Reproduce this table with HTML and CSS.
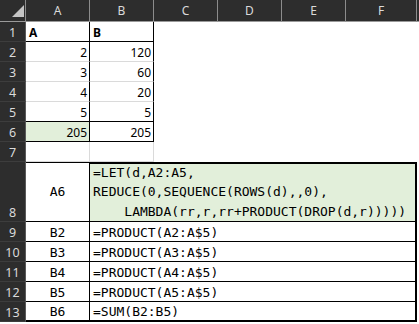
FILE: index.html
```html
<!DOCTYPE html>
<html>
  <head>
    <meta charset="utf-8" />
    <title>Sheet1</title>
    <link rel="stylesheet" href="styles.css">
  </head>
  <body>
    <div class="sheet">
      <!-- column headings -->
      <div class="corner">
        <svg width="26" height="21" viewBox="0 0 26 21"><polygon points="12,17 24,17 24,5" fill="#c4c4c4"/></svg>
      </div>
      <div class="ch">A</div>
      <div class="ch">B</div>
      <div class="ch">C</div>
      <div class="ch">D</div>
      <div class="ch">E</div>
      <div class="ch">F</div>
      <div class="ch end"></div>

      <!-- small table A1:B6 -->
      <div class="rh">1</div>
      <div class="c ta ul bold">A</div>
      <div class="c ta ul bold">B</div>
      <div class="c"></div><div class="c"></div><div class="c"></div><div class="c"></div><div class="c"></div>

      <div class="rh">2</div>
      <div class="c ta num">2</div>
      <div class="c ta num">120</div>
      <div class="c"></div><div class="c"></div><div class="c"></div><div class="c"></div><div class="c"></div>

      <div class="rh">3</div>
      <div class="c ta num">3</div>
      <div class="c ta num">60</div>
      <div class="c"></div><div class="c"></div><div class="c"></div><div class="c"></div><div class="c"></div>

      <div class="rh">4</div>
      <div class="c ta num">4</div>
      <div class="c ta num">20</div>
      <div class="c"></div><div class="c"></div><div class="c"></div><div class="c"></div><div class="c"></div>

      <div class="rh">5</div>
      <div class="c ta ul num">5</div>
      <div class="c ta ul num">5</div>
      <div class="c"></div><div class="c"></div><div class="c"></div><div class="c"></div><div class="c"></div>

      <div class="rh">6</div>
      <div class="c ta ul num green">205</div>
      <div class="c ta ul num">205</div>
      <div class="c"></div><div class="c"></div><div class="c"></div><div class="c"></div><div class="c"></div>

      <div class="rh">7</div>
      <div class="c grid"></div>
      <div class="c grid"></div>
      <div class="c"></div><div class="c"></div><div class="c"></div><div class="c"></div><div class="c"></div>

      <!-- formulas block A8:F13 -->
      <div class="rh">8</div>
      <div class="c ka top">A6</div>
      <div class="c kb top green multi">=LET(d,A2:A5,<br>REDUCE(0,SEQUENCE(ROWS(d),,0),<br>&nbsp;&nbsp;&nbsp;&nbsp;LAMBDA(rr,r,rr+PRODUCT(DROP(d,r)))))</div>
      <div class="c"></div>

      <div class="rh">9</div>
      <div class="c ka">B2</div>
      <div class="c kb">=PRODUCT(A2:A$5)</div>
      <div class="c"></div>

      <div class="rh">10</div>
      <div class="c ka">B3</div>
      <div class="c kb">=PRODUCT(A3:A$5)</div>
      <div class="c"></div>

      <div class="rh">11</div>
      <div class="c ka">B4</div>
      <div class="c kb">=PRODUCT(A4:A$5)</div>
      <div class="c"></div>

      <div class="rh">12</div>
      <div class="c ka">B5</div>
      <div class="c kb">=PRODUCT(A5:A$5)</div>
      <div class="c"></div>

      <div class="rh">13</div>
      <div class="c ka last">B6</div>
      <div class="c kb last">=SUM(B2:B5)</div>
      <div class="c"></div>
    </div>
  </body>
</html>
```

FILE: styles.css
```css
body {
  margin: 0;
  background: #fff;
  font-family: "Noto Sans", sans-serif;
}
.sheet {
  display: grid;
  grid-template-columns: 26px repeat(5, 64px) 71px 2px;
  grid-template-rows: 22px repeat(7, 20px) 60px repeat(5, 20px);
  width: 419px;
}
.sheet > div {
  box-sizing: border-box;
}
.corner {
  background: #2d2d2d;
  border-right: 1px solid #8c8c8c;
  border-bottom: 1px solid #9a9a9a;
}
.corner svg {
  display: block;
}
.ch {
  display: flex;
  align-items: center;
  justify-content: center;
  background: #2d2d2d;
  color: #dadada;
  font-size: 12px;
  border-right: 1px solid #8c8c8c;
  border-bottom: 1px solid #9a9a9a;
}
.ch.end {
  border-right: none;
}
.rh {
  display: flex;
  align-items: flex-end;
  justify-content: center;
  background: #2d2d2d;
  color: #dadada;
  font-size: 12.5px;
  line-height: 17px;
  border-bottom: 1px solid #3d3d3d;
  border-right: 1px solid #5a5a5a;
}
.c {
  display: flex;
  align-items: flex-end;
  font-size: 12px;
  line-height: 16px;
  color: #000;
  background: #fff;
}
.grid {
  border-right: 1px solid #dadada;
  border-bottom: 1px solid #dadada;
}
.ta {
  border-right: 1px solid #000;
  border-bottom: 1px solid #dadada;
  padding: 0 2px 0 3px;
}
.ta.ul {
  border-bottom-color: #000;
}
.bold {
  font-weight: bold;
}
.num {
  justify-content: flex-end;
}
.green {
  background: #e2efda;
}
.ka,
.kb {
  font-family: "DejaVu Sans Mono", monospace;
  font-size: 13px;
  line-height: 15px;
  padding-bottom: 1px;
  border-right: 1px solid #000;
  border-bottom: 1px solid #000;
}
.ka {
  justify-content: center;
}
.kb {
  grid-column: span 5;
  padding-left: 3px;
  border-right-width: 2px;
  white-space: nowrap;
}
.ka.top {
  align-items: center;
  border-top: 1px solid #000;
}
.kb.top {
  border-top: 2px solid #000;
}
.multi {
  line-height: 19.5px;
  padding-bottom: 0;
}
.last {
  border-bottom-width: 2px;
}
```
